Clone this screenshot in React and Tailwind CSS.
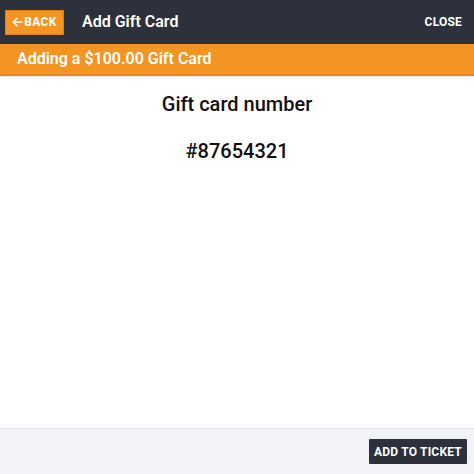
import React from "react";

export default function App() {
  return (
    <div className="w-[474px] h-[474px] flex flex-col bg-white overflow-hidden" style={{ fontFamily: "Roboto, 'Noto Sans', sans-serif" }}>
      <div className="h-[44px] bg-[#2c313c] flex items-center justify-between pl-[5px] pr-[12px] shrink-0">
        <div className="flex items-center">
          <button className="h-[25px] w-[59px] bg-[#f39423] border border-[#d97f14] flex items-center justify-center text-white text-[12px] font-bold tracking-[0.3px]">
            <svg width="11" height="10" viewBox="0 0 11 10" className="mr-[1px]" fill="none" stroke="white" strokeWidth="1.4" strokeLinecap="round" strokeLinejoin="round">
              <path d="M10 5H1.5M5 1.2L1.2 5L5 8.8" />
            </svg>
            BACK
          </button>
          <span className="ml-[18px] text-white text-[16px] font-semibold">Add Gift Card</span>
        </div>
        <span className="text-white text-[12px] font-bold tracking-[0.2px]">CLOSE</span>
      </div>
      <div className="h-[32px] bg-[#f39423] border-b-2 border-[#e6861a] flex items-center pl-[17px] text-white text-[16px] font-semibold shrink-0 shadow-[0_1px_2px_rgba(0,0,0,0.15)]">
        Adding a $100.00 Gift Card
      </div>
      <div className="flex-1 flex flex-col items-center pt-[15px]">
        <div className="text-[20px] font-medium text-[#111] leading-[26px]">Gift card number</div>
        <div className="text-[20px] font-medium text-[#111] leading-[26px] mt-[21px]">#87654321</div>
      </div>
      <div className="h-[46px] bg-[#f2f3f6] border-t border-[#e8e9ec] flex items-center justify-end pr-[7px] shrink-0">
        <button className="h-[25px] w-[98px] bg-[#2c313c] text-white text-[12px] font-bold tracking-[0.2px] flex items-center justify-center rounded-[1px]">
          ADD TO TICKET
        </button>
      </div>
    </div>
  );
}
